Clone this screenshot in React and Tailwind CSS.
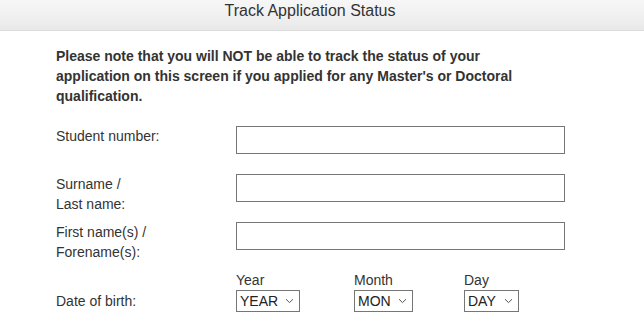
import React from "react";

const font = { fontFamily: '"Liberation Sans", Arial, sans-serif' };

function Chevron() {
  return (
    <svg
      width="9"
      height="6"
      viewBox="0 0 9 6"
      className="pointer-events-none absolute right-[6px] top-1/2 -translate-y-1/2"
    >
      <path d="M1 1.2 L4.5 4.6 L8 1.2" fill="none" stroke="#555" strokeWidth="1" />
    </svg>
  );
}

function DateSelect({ label, value, width }) {
  return (
    <div className="flex flex-col">
      <span className="text-[14px] leading-[19px] text-[#333]">{label}</span>
      <div className="relative" style={{ width }}>
        <select
          className="block h-[22px] w-full appearance-none border border-[#767676] bg-white pl-[3px] text-[14px] leading-[20px] text-[#222] outline-none"
          defaultValue=""
        >
          <option value="">{value}</option>
        </select>
        <Chevron />
      </div>
    </div>
  );
}

function Field({ label, rowClass }) {
  return (
    <div className={`flex ${rowClass}`}>
      <label className="w-[180px] text-[14px] leading-[20px] text-[#333]">
        {label}
      </label>
      <input
        type="text"
        className="h-[28px] w-[329px] border border-[#767676] bg-white px-1 text-[14px] outline-none"
      />
    </div>
  );
}

export default function App() {
  return (
    <div className="min-h-[318px] bg-white" style={font}>
      <div className="h-[31px] border-b border-[#dcdcdc] bg-gradient-to-b from-[#f7f7f7] to-[#e9e9e9] pr-[24px] text-center text-[16px] leading-[22px] text-[#333]">
        Track Application Status
      </div>

      <div className="pl-[56px] pt-[15px]">
        <p className="w-[460px] text-[14px] font-bold leading-[20px] text-[#333]">
          Please note that you will NOT be able to track the status of your
          application on this screen if you applied for any Master's or
          Doctoral qualification.
        </p>

        <div className="mt-[20px]">
          <Field label="Student number:" rowClass="h-[48px]" />
          <Field
            label={
              <>
                Surname /
                <br />
                Last name:
              </>
            }
            rowClass="h-[48px]"
          />
          <Field
            label={
              <>
                First name(s) /
                <br />
                Forename(s):
              </>
            }
            rowClass="h-[49px]"
          />

          <div className="flex items-end">
            <span className="w-[180px] pb-[1px] text-[14px] leading-[20px] text-[#333]">
              Date of birth:
            </span>
            <div className="w-[118px]">
              <DateSelect label="Year" value="YEAR" width={64} />
            </div>
            <div className="w-[110px]">
              <DateSelect label="Month" value="MON" width={59} />
            </div>
            <div>
              <DateSelect label="Day" value="DAY" width={55} />
            </div>
          </div>
        </div>
      </div>
    </div>
  );
}
